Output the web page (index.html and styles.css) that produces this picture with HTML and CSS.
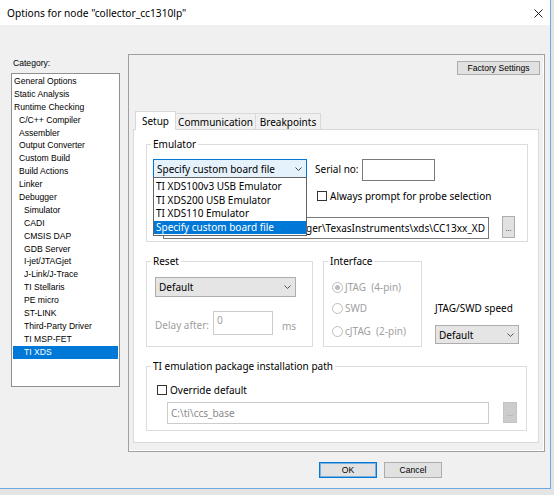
FILE: index.html
```html
<!DOCTYPE html>
<html>
<head>
<meta charset="utf-8">
<title>Options for node</title>
<link rel="stylesheet" href="styles.css">
</head>
<body>
<div class="window">
  <div class="titlebar">
    <span class="title">Options for node "collector_cc1310lp"</span>
    <svg class="close" width="9" height="9" viewBox="0 0 9 9"><path d="M0.5 0.5 L8.5 8.5 M8.5 0.5 L0.5 8.5" stroke="#222" stroke-width="1" fill="none"/></svg>
  </div>
  <div class="client">
    <div class="leftcol">
      <div class="cat-label">Category:</div>
      <ul class="catlist">
        <li class="l0">General Options</li>
        <li class="l0">Static Analysis</li>
        <li class="l0">Runtime Checking</li>
        <li class="l1">C/C++ Compiler</li>
        <li class="l1">Assembler</li>
        <li class="l1">Output Converter</li>
        <li class="l1">Custom Build</li>
        <li class="l1">Build Actions</li>
        <li class="l1">Linker</li>
        <li class="l1">Debugger</li>
        <li class="l2">Simulator</li>
        <li class="l2">CADI</li>
        <li class="l2">CMSIS DAP</li>
        <li class="l2">GDB Server</li>
        <li class="l2">I-jet/JTAGjet</li>
        <li class="l2">J-Link/J-Trace</li>
        <li class="l2">TI Stellaris</li>
        <li class="l2">PE micro</li>
        <li class="l2">ST-LINK</li>
        <li class="l2">Third-Party Driver</li>
        <li class="l2">TI MSP-FET</li>
        <li class="l2 selected">TI XDS</li>
      </ul>
    </div>
    <div class="rightcol">
      <div class="frame">
        <div class="factory-row"><div class="btn factory">Factory Settings</div></div>
        <div class="tabs">
          <div class="tab active t-setup">Setup</div>
          <div class="tab t-comm">Communication</div>
          <div class="tab t-bp">Breakpoints</div>
        </div>
        <div class="tabpage">
          <fieldset class="group emulator">
            <legend>Emulator</legend>
            <div class="row r1">
              <div class="combo combo-emu">
                <span>Specify custom board file</span>
                <svg class="chev" width="7" height="4" viewBox="0 0 7 4"><polyline points="0.5,0.5 3.5,3.5 6.5,0.5" fill="none" stroke="#444" stroke-width="1"/></svg>
                <ul class="droplist">
                  <li>TI XDS100v3 USB Emulator</li>
                  <li>TI XDS200 USB Emulator</li>
                  <li>TI XDS110 Emulator</li>
                  <li class="hl">Specify custom board file</li>
                </ul>
              </div>
              <span class="serial-lbl">Serial no:</span>
              <div class="input serial"></div>
            </div>
            <div class="row r2">
              <span class="check"></span><span>Always prompt for probe selection</span>
            </div>
            <div class="row r3">
              <div class="input path"><span>gger\TexasInstruments\xds\CC13xx_XD</span></div>
              <div class="btn browse">...</div>
            </div>
          </fieldset>
          <div class="mid-row">
            <fieldset class="group reset">
              <legend>Reset</legend>
              <div class="combo combo-reset">
                <span>Default</span>
                <svg class="chev" width="7" height="4" viewBox="0 0 7 4"><polyline points="0.5,0.5 3.5,3.5 6.5,0.5" fill="none" stroke="#555" stroke-width="1"/></svg>
              </div>
              <div class="delay-row">
                <span class="delay-lbl">Delay after:</span>
                <div class="input delay">0</div>
                <span class="ms">ms</span>
              </div>
            </fieldset>
            <fieldset class="group iface">
              <legend>Interface</legend>
              <div class="radio-row rr1"><span class="radio on"></span><span>JTAG&nbsp;&nbsp;(4-pin)</span></div>
              <div class="radio-row rr2"><span class="radio"></span><span>SWD</span></div>
              <div class="radio-row rr3"><span class="radio"></span><span>cJTAG&nbsp;&nbsp;(2-pin)</span></div>
            </fieldset>
            <div class="speed">
              <div class="speed-lbl">JTAG/SWD speed</div>
              <div class="combo combo-speed">
                <span>Default</span>
                <svg class="chev" width="7" height="4" viewBox="0 0 7 4"><polyline points="0.5,0.5 3.5,3.5 6.5,0.5" fill="none" stroke="#555" stroke-width="1"/></svg>
              </div>
            </div>
          </div>
          <fieldset class="group tipath">
            <legend>TI emulation package installation path</legend>
            <div class="row tr1"><span class="check"></span><span>Override default</span></div>
            <div class="row tr2">
              <div class="input tipath-input">C:\ti\ccs_base</div>
              <div class="btn browse disabled">...</div>
            </div>
          </fieldset>
        </div>
      </div>
      <div class="buttons">
        <div class="btn ok">OK</div>
        <div class="btn cancel">Cancel</div>
      </div>
    </div>
  </div>
</div>
</body>
</html>
```

FILE: styles.css
```css
* { box-sizing: border-box; }
html, body { margin: 0; padding: 0; }
body {
  width: 554px;
  height: 495px;
  overflow: hidden;
  background: #e4e4e4;
  font-family: "Noto Sans", "Open Sans", sans-serif;
  font-size: 10px;
  color: #000;
}
.window {
  width: 551px;
  height: 489px;
  background: #f0f0f0;
  border-right: 1px solid #6fa8e0;
  border-bottom: 1px solid #6fa8e0;
  display: flex;
  flex-direction: column;
}
.titlebar {
  height: 25px;
  flex: none;
  background: #fff;
  display: flex;
  align-items: center;
  padding: 1px 7px 0;
}
.title { flex: 1; font-size: 10.2px; white-space: nowrap; }
.close { display: block; }

.client { flex: 1; display: flex; }
.leftcol { width: 128px; flex: none; padding: 32px 0 0 11px; }
.cat-label {
  font-family: "Liberation Sans", Arial, sans-serif;
  font-size: 8.6px;
  line-height: 12px;
  padding-left: 2px;
}
.catlist {
  list-style: none;
  margin: 4px 0 0;
  padding: 1px 1px 0 1px;
  width: 109px;
  height: 314px;
  border: 1px solid #8e8f8f;
  background: #fff;
  font-family: "Liberation Sans", Arial, sans-serif;
  font-size: 8.6px;
}
.catlist li { height: 12.9px; line-height: 12.9px; white-space: nowrap; }
.catlist .l0 { padding-left: 1px; }
.catlist .l1 { padding-left: 6px; }
.catlist .l2 { padding-left: 11px; }
.catlist .selected { background: #0078d7; color: #fff; }

.rightcol { width: 417px; flex: none; padding-top: 29px; display: flex; flex-direction: column; }
.frame {
  width: 417px;
  height: 398px;
  border: 1px solid #a0a0a0;
  box-shadow: inset -1px -1px 0 #fff;
  padding: 0 4px;
  display: flex;
  flex-direction: column;
}
.btn {
  background: #e1e1e1;
  border: 1px solid #adadad;
  font-family: "Liberation Sans", Arial, sans-serif;
  font-size: 8.6px;
  display: flex;
  align-items: center;
  justify-content: center;
  white-space: nowrap;
}
.factory-row { display: flex; justify-content: flex-end; margin-top: 6px; }
.factory { width: 83px; height: 14px; }

.tabs { display: flex; align-items: flex-end; margin-top: 36px; padding-left: 2px; height: 18px; }
.tab {
  height: 16px;
  border: 1px solid #d9d9d9;
  border-bottom: none;
  background: #f0f0f0;
  display: flex;
  align-items: center;
  justify-content: center;
  white-space: nowrap;
  margin-left: -1px;
}
.tab.active {
  height: 19px;
  margin-bottom: -1px;
  margin-left: 0;
  background: #fff;
  position: relative;
  z-index: 1;
}
.t-setup { width: 41px; }
.t-comm { width: 81px; }
.t-bp { width: 66px; }

.tabpage {
  width: 406px;
  height: 314px;
  border: 1px solid #d9d9d9;
  background: #fff;
  padding-left: 12px;
}

fieldset.group {
  margin: 0;
  padding: 0;
  border: 1px solid #dcdcdc;
  min-width: 0;
}
fieldset.group legend {
  padding: 0 2px;
  margin-left: 4px;
  line-height: 14px;
  font-size: 10px;
}
.row { display: flex; }

.emulator { width: 382px; margin-top: 7px !important; padding-bottom: 2px !important; }
.r1 { margin-top: 8px; height: 22px; align-items: flex-start; }
.combo {
  position: relative;
  display: flex;
  align-items: center;
  justify-content: space-between;
  padding: 0 4px 0 3px;
  background: #e5e5e5;
  border: 1px solid #adadad;
  white-space: nowrap;
}
.chev { display: block; flex: none; }
.combo-emu {
  margin-left: 6px;
  width: 154px;
  height: 19px;
  background: #e5f1fb;
  border-color: #0078d7;
}
.droplist {
  position: absolute;
  top: 100%;
  left: -1px;
  width: 154px;
  margin: 0;
  padding: 2px 0 1px;
  list-style: none;
  background: #fff;
  border: 1px solid #646464;
  z-index: 10;
}
.droplist li { height: 13.5px; line-height: 13.5px; padding-left: 2px; }
.droplist li.hl { background: #0078d7; color: #fff; }
.serial-lbl { margin-left: 8px; width: 47px; line-height: 20px; white-space: nowrap; }
.input { background: #fff; border: 1px solid #7a7a7a; }
.serial { width: 73px; height: 22px; }
.r2 { margin-top: 8px; height: 14px; align-items: center; padding-left: 170px; white-space: nowrap; }
.check { width: 10px; height: 10px; border: 1px solid #333; background: #fff; margin-right: 3px; flex: none; }
.r3 { margin-top: 13px; height: 23px; align-items: flex-start; }
.path {
  margin-left: 16px;
  margin-top: 1px;
  width: 326px;
  height: 22px;
  overflow: hidden;
  display: flex;
  justify-content: flex-end;
  align-items: center;
  padding-right: 3px;
  white-space: nowrap;
}
.path span { flex: none; }
.browse { margin-left: 13px; width: 13px; height: 22px; align-items: flex-end; padding-bottom: 5px; font-size: 7px; }
.browse.disabled { margin-left: 14px; width: 14px; height: 21px; background: #cccccc; border-color: #c4c4c4; color: #8a8a8a; }

.mid-row { display: flex; align-items: flex-start; margin-top: 12px; }
.reset { width: 167px; padding-bottom: 11px !important; }
.combo-reset { margin: 9px 0 0 8px; width: 141px; height: 20px; }
.delay-row { display: flex; align-items: center; margin-top: 14px; padding-left: 8px; height: 24px; color: #a0a0a0; }
.delay-lbl { width: 58px; white-space: nowrap; padding-top: 3px; }
.delay { width: 60px; height: 24px; border-color: #cccccc; padding: 1px 3px; align-self: flex-start; line-height: 14px; }
.ms { margin-left: 9px; padding-top: 5px; }

.iface { width: 99px; margin-left: 10px !important; padding-bottom: 8px !important; }
.radio-row { display: flex; align-items: center; height: 14px; padding-left: 8px; color: #a0a0a0; white-space: nowrap; }
.rr1 { margin-top: 12px; }
.rr2 { margin-top: 7px; }
.rr3 { margin-top: 9px; }
.radio {
  width: 11px;
  height: 11px;
  border: 1px solid #bcbcbc;
  border-radius: 50%;
  background: #fff;
  margin-right: 2px;
  flex: none;
  display: flex;
  align-items: center;
  justify-content: center;
}
.radio.on::after { content: ""; width: 5px; height: 5px; border-radius: 50%; background: #bcbcbc; }

.speed { margin-left: 13px; margin-top: 47px; }
.speed-lbl { line-height: 14px; white-space: nowrap; }
.combo-speed { margin-top: 10px; width: 84px; height: 19px; }

.tipath { width: 381px; margin-top: 12px !important; padding-bottom: 6px !important; }
.tipath legend { white-space: nowrap; }
.tr1 { margin-top: 10px; height: 14px; align-items: center; padding-left: 10px; }
.tr2 { margin-top: 5px; align-items: flex-start; }
.tipath-input {
  margin-left: 20px;
  width: 322px;
  height: 22px;
  border-color: #cccccc;
  color: #8a8a8a;
  padding-left: 3px;
  line-height: 20px;
}

.buttons { display: flex; margin-top: 10px; padding-left: 191px; }
.ok { width: 58px; height: 16px; border-color: #0078d7; box-shadow: inset 0 0 0 1px rgba(0,120,215,0.45); }
.cancel { width: 58px; height: 16px; margin-left: 7px; }
```
